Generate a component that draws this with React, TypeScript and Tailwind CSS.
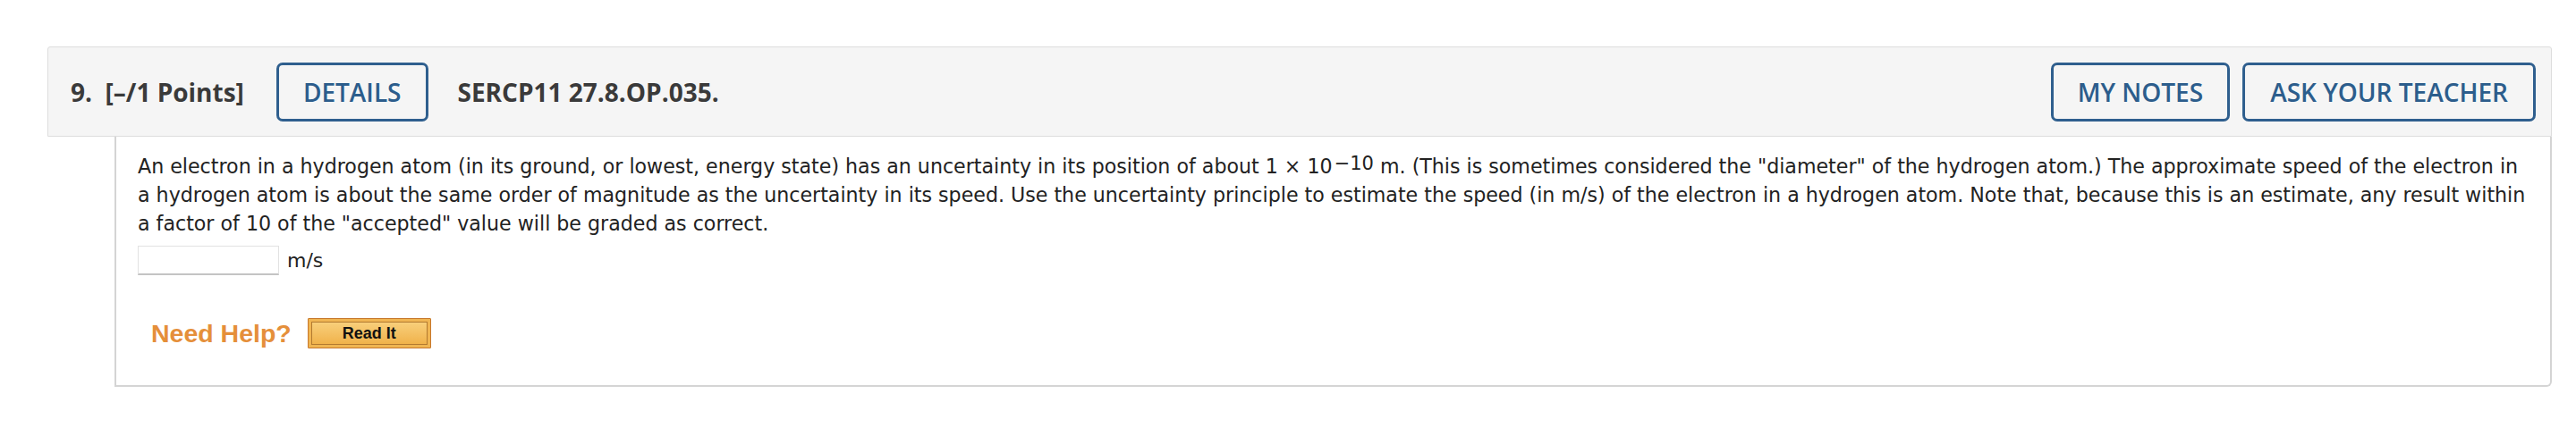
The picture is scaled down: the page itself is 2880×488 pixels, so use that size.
export default function App() {
  return (
    <div className="w-[2880px] h-[488px] bg-white pl-[53px] pr-[27px] pt-[52px]">
      {/* question header */}
      <div className="flex items-center h-[101px] pl-[25px] pr-[17px] bg-[#f5f5f5] border border-[#dddddd] rounded-t-[3px] font-['Open_Sans',sans-serif]">
        <span className="text-[28px] font-bold text-[#3a3a3a] whitespace-pre">9.  [–/1 Points]</span>
        <button className="ml-[36px] h-[66px] px-[27px] border-[3px] border-[#2f5f8e] rounded-[7px] text-[28px] font-semibold text-[#2c5d8c]">
          DETAILS
        </button>
        <span className="ml-[33px] text-[28px] font-bold text-[#3a3a3a]">SERCP11 27.8.OP.035.</span>
        <div className="ml-auto flex gap-[14px]">
          <button className="h-[66px] px-[27px] border-[3px] border-[#2f5f8e] rounded-[7px] text-[28px] font-semibold text-[#2c5d8c]">
            MY NOTES
          </button>
          <button className="h-[66px] px-[28px] border-[3px] border-[#2f5f8e] rounded-[7px] text-[28px] font-semibold text-[#2c5d8c]">
            ASK YOUR TEACHER
          </button>
        </div>
      </div>

      {/* question body */}
      <div className="ml-[75px] h-[280px] border-x-2 border-b-2 border-[#d4d4d4] rounded-br-[6px] pl-[24px] pr-[8px] pt-[17px]">
        <p className="font-['DejaVu_Sans',sans-serif] text-[22.15px] leading-[32px] text-[#222222]">
          An electron in a hydrogen atom (in its ground, or lowest, energy state) has an uncertainty in its position of
          about 1 × 10<sup className="text-[21px] relative -top-[4px] ml-[2px]">−10</sup> m. (This is sometimes considered the
          "diameter" of the hydrogen atom.) The approximate speed of the electron in
          <br />
          a hydrogen atom is about the same order of magnitude as the uncertainty in its speed. Use the uncertainty principle
          to estimate the speed (in m/s) of the electron in a hydrogen atom. Note that, because this is an estimate, any
          result within
          <br />
          a factor of 10 of the "accepted" value will be graded as correct.
        </p>
        <div className="mt-[9px] flex items-center gap-[9px] font-['DejaVu_Sans',sans-serif] text-[22px] text-[#222222]">
          <input
            type="text"
            className="w-[158px] h-[33px] border border-[#e2e2e2] border-b-[#c4c4c4] border-b-2 bg-white outline-none"
          />
          <span>m/s</span>
        </div>
        <div className="mt-[44px] ml-[15px] flex items-center gap-[18px]">
          <span className="font-['Liberation_Sans',sans-serif] font-bold text-[28.5px] text-[#e58f3a]">Need Help?</span>
          <button className="w-[138px] h-[34px] p-[3px] bg-[#f0b552] border border-[#c7782c] rounded-[1px]">
            <span className="flex items-center justify-center h-full border border-[#b27a30] bg-gradient-to-b from-[#f8cf7a] to-[#f0b24a] font-['Liberation_Sans',sans-serif] font-bold text-[18px] text-[#111111]">
              Read It
            </span>
          </button>
        </div>
      </div>
    </div>
  );
}
